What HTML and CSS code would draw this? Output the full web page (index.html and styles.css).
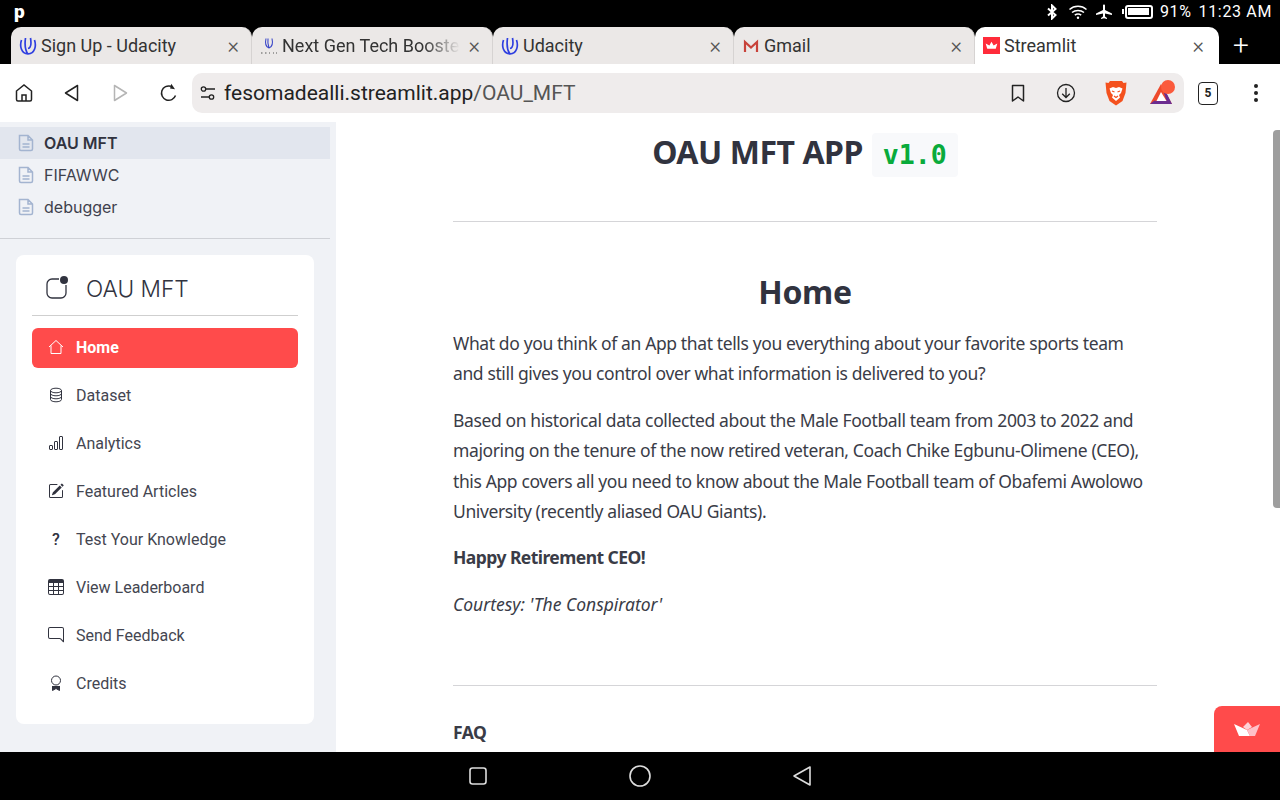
FILE: index.html
```html
<!DOCTYPE html>
<html lang="en">
<head>
    <meta charset="UTF-8">
    <title>Streamlit</title>
    <link rel="stylesheet" href="styles.css">
</head>
<body>
    <div class="status-bar">
        <span class="status-p">p</span>
        <div class="status-right">
            <svg width="14" height="16" viewBox="0 0 14 16"><path d="M3 4.500 10.500 11 7 14.500V1.500L10.500 5 3 11.500" fill="none" stroke="#fff" stroke-width="2"/></svg>
            <svg class="status-wifi" width="20" height="16" viewBox="0 0 20 16" fill="none" stroke="#fff" stroke-width="1.500"><path d="M1.500 5.500c4.700-4.300 12.300-4.300 17 0M4 8.500c3.200-2.800 8.800-2.800 12 0M6.800 11.200c1.800-1.400 4.600-1.400 6.400 0"/><circle cx="10" cy="13.800" r="1.200" fill="#fff" stroke="none"/></svg>
            <svg width="18" height="16" viewBox="0 0 18 16" fill="#fff"><path d="M8 1.500c0-1.200 2-1.200 2 0V6l7 3.500v1.500L10 9.500v3l2 1.500v1l-3-.8-3 .8v-1l2-1.500v-3L1 11V9.500L8 6z"/></svg>
            <span class="battery-nub"></span>
            <span class="battery"><span class="battery-fill"></span></span>
            <span class="status-text">91%</span>
            <span class="status-text">11:23 AM</span>
        </div>
    </div>

    <div class="tab-strip">
        <div class="tab">
            <svg class="tab-icon" width="18" height="18" viewBox="0 0 18 18" fill="none" stroke="#2f3fe0" stroke-width="1.700"><path d="M2.500 3C.5 9 2 16.500 9 17c7-.5 8.500-8 6.500-14M6.500 1C5.500 8 6 13 9 17M11.500 1C12.500 7 12 11 9 11.500"/></svg>
            <span class="tab-title">Sign Up - Udacity</span>
            <span class="tab-close">×</span>
        </div>
        <div class="tab">
            <svg class="tab-icon" width="18" height="18" viewBox="0 0 18 18" fill="none" stroke="#3a46c8" stroke-width="1.100"><path d="M6 1.500C5 6 6 10 9 11c3-1 4-5 3-9.500M8 1.500C7.500 5 8 8 9 11"/><path d="M1 16h1.500M5 16h1.500M9 16h1M13 16h1M16 16h1" stroke="#555"/></svg>
            <span class="tab-title tab-fade">Next Gen Tech Booster</span>
            <span class="tab-close">×</span>
        </div>
        <div class="tab">
            <svg class="tab-icon" width="18" height="18" viewBox="0 0 18 18" fill="none" stroke="#2f3fe0" stroke-width="1.700"><path d="M2.500 3C.5 9 2 16.500 9 17c7-.5 8.500-8 6.500-14M6.500 1C5.500 8 6 13 9 17M11.500 1C12.500 7 12 11 9 11.500"/></svg>
            <span class="tab-title">Udacity</span>
            <span class="tab-close">×</span>
        </div>
        <div class="tab">
            <svg class="tab-icon" width="18" height="18" viewBox="0 0 18 18" fill="none" stroke="#c8423a" stroke-width="2.200"><path d="M3 15V5l6 5.500L15 5v10"/></svg>
            <span class="tab-title">Gmail</span>
            <span class="tab-close">×</span>
        </div>
        <div class="tab tab-active">
            <svg class="tab-icon" width="17" height="17" viewBox="0 0 16 16"><rect width="16" height="16" fill="#ff2b3a"/><path d="M2.500 6 6 8l2-3.500L10 8l3.500-2-1.500 5H4z" fill="#fff"/></svg>
            <span class="tab-title">Streamlit</span>
            <span class="tab-close">×</span>
        </div>
        <span class="tab-new">+</span>
    </div>

    <div class="toolbar">
        <div class="tool-btn">
            <svg width="20" height="20" viewBox="0 0 20 20" fill="none" stroke="#222" stroke-width="1.500"><path d="M2.500 8 10 2l7.500 6v8.500a1.500 1.500 0 0 1-1.500 1.500H4a1.500 1.500 0 0 1-1.500-1.500zM8 18v-6h4v6"/></svg>
        </div>
        <div class="tool-btn">
            <svg width="20" height="20" viewBox="0 0 20 20" fill="none" stroke="#222" stroke-width="1.500" stroke-linejoin="round"><path d="M15.500 2.500v15L3.500 10z"/></svg>
        </div>
        <div class="tool-btn">
            <svg width="20" height="20" viewBox="0 0 20 20" fill="none" stroke="#b5b5b5" stroke-width="1.500" stroke-linejoin="round"><path d="M4.500 2.500v15l12-7.500z"/></svg>
        </div>
        <div class="tool-btn tool-reload">
            <svg width="20" height="20" viewBox="0 0 20 20" fill="none" stroke="#222" stroke-width="1.500"><path d="M16.500 12.500A7.200 7.200 0 1 1 12 3.300"/><path d="M11.500 1v5l5-.5z" fill="#222" stroke="none" transform="rotate(15 13 4)"/></svg>
        </div>
        <div class="address-bar">
            <svg class="address-tune" width="18" height="18" viewBox="0 0 18 18" fill="none" stroke="#222" stroke-width="1.300"><circle cx="4.500" cy="5" r="2.200"/><path d="M7 5h9M2 13h8"/><circle cx="12.500" cy="13" r="2.200"/></svg>
            <span class="address-text">fesomadealli.streamlit.app<span class="address-path">/OAU_MFT</span></span>
            <div class="address-icons">
                <svg width="20" height="20" viewBox="0 0 20 20" fill="none" stroke="#222" stroke-width="1.500" stroke-linejoin="round"><path d="M4.500 2.500h11v15.500L10 14l-5.500 4z"/></svg>
                <svg width="20" height="20" viewBox="0 0 20 20" fill="none" stroke="#222" stroke-width="1.300"><circle cx="10" cy="10" r="8.500"/><path d="M10 5v9.500M6.200 10.800 10 14.500l3.800-3.700"/></svg>
                <svg class="brave-icon" width="24" height="26" viewBox="0 0 24 26"><path d="M6 1h12l1.500 2 3-.5L21.500 13l-3 8-6.500 4.500L5.500 21l-3-8L1.500 2.500l3 .5z" fill="#f4511e"/><path d="M5.500 8.500 9 7l3 1 3-1 3.500 1.500L17 13l-2 2 1 2.500-4 3.500-4-3.500 1-2.500-2-2z" fill="#fff"/><path d="M8 11l2.500 1M16 11l-2.500 1M10 16l2 1.500 2-1.500" stroke="#f4511e" stroke-width="1.300" fill="none"/></svg>
                <svg class="bat-icon" width="30" height="30" viewBox="0 0 30 30"><path d="M15 6 4 26h22z" fill="#ee4a2c"/><path d="M4 26h22L20 14l-2 1 2.500 8h-10l-2-.5z" fill="#6b2d90"/><path d="M15 14 10.500 23h10z" fill="#fff"/><circle cx="22" cy="9" r="7" fill="#fb5a3c"/></svg>
            </div>
        </div>
        <div class="tool-right">
            <span class="tab-count">5</span>
            <svg width="6" height="20" viewBox="0 0 6 20" fill="#222"><circle cx="3" cy="3" r="2"/><circle cx="3" cy="10" r="2"/><circle cx="3" cy="17" r="2"/></svg>
        </div>
    </div>

    <div class="app">
        <aside class="sidebar">
            <ul class="page-nav">
                <li class="page-link page-link-active">
                    <svg class="page-icon" width="16" height="18" viewBox="0 0 16 18" fill="none" stroke="#a3b4d0" stroke-width="1.500"><path d="M1.500 1.500h8.500l4.500 4.500v9a1.500 1.500 0 0 1-1.500 1.500H3A1.500 1.500 0 0 1 1.500 15zM10 1.500V6h4.500M4.500 10h7M4.500 13h7"/></svg>
                    OAU MFT
                </li>
                <li class="page-link">
                    <svg class="page-icon" width="16" height="18" viewBox="0 0 16 18" fill="none" stroke="#a3b4d0" stroke-width="1.500"><path d="M1.500 1.500h8.500l4.500 4.500v9a1.500 1.500 0 0 1-1.500 1.500H3A1.500 1.500 0 0 1 1.500 15zM10 1.500V6h4.500M4.500 10h7M4.500 13h7"/></svg>
                    FIFAWWC
                </li>
                <li class="page-link">
                    <svg class="page-icon" width="16" height="18" viewBox="0 0 16 18" fill="none" stroke="#a3b4d0" stroke-width="1.500"><path d="M1.500 1.500h8.500l4.500 4.500v9a1.500 1.500 0 0 1-1.500 1.500H3A1.500 1.500 0 0 1 1.500 15zM10 1.500V6h4.500M4.500 10h7M4.500 13h7"/></svg>
                    debugger
                </li>
            </ul>
            <div class="side-divider"></div>

            <div class="menu-card">
                <div class="menu-title">
                    <svg width="24" height="24" viewBox="0 0 24 24" fill="none" stroke="#31333f" stroke-width="1.300"><path d="M14 3H7a5 5 0 0 0-5 5v9a5 5 0 0 0 5 5h9a5 5 0 0 0 5-5V9"/><circle cx="19" cy="4" r="4" fill="#31333f" stroke="none"/></svg>
                    <span>OAU MFT</span>
                </div>
                <div class="menu-rule"></div>
                <ul class="menu-list">
                    <li class="menu-item menu-item-active">
                        <svg width="16" height="16" viewBox="0 0 16 16" fill="none" stroke="#fff" stroke-width="1"><path d="M1 8 8 1.500 15 8M3 6.500v8h10v-8"/></svg>
                        Home
                    </li>
                    <li class="menu-item">
                        <svg width="16" height="16" viewBox="0 0 16 16" fill="none" stroke="#31333f" stroke-width="1"><ellipse cx="8" cy="3.500" rx="5.500" ry="2.300"/><path d="M2.500 3.500v9c0 1.300 2.500 2.300 5.500 2.300s5.500-1 5.500-2.300v-9M2.500 6.500c0 1.300 2.500 2.300 5.500 2.300s5.500-1 5.500-2.300M2.500 9.500c0 1.300 2.500 2.300 5.500 2.300s5.500-1 5.500-2.300"/></svg>
                        Dataset
                    </li>
                    <li class="menu-item">
                        <svg width="16" height="16" viewBox="0 0 16 16" fill="none" stroke="#31333f" stroke-width="1"><rect x="1.500" y="10.500" width="3" height="4" rx=".5"/><rect x="6.500" y="6.500" width="3" height="8" rx=".5"/><rect x="11.500" y="1.500" width="3" height="13" rx=".5"/></svg>
                        Analytics
                    </li>
                    <li class="menu-item">
                        <svg width="16" height="16" viewBox="0 0 16 16" fill="#31333f"><path d="M15.502 1.940a.5.5 0 0 1 0 .706L14.459 3.690l-2-2L13.502.646a.5.5 0 0 1 .707 0l1.293 1.293zm-1.750 2.456-2-2L4.939 9.210a.5.5 0 0 0-.121.196l-.805 2.414a.25.25 0 0 0 .316.316l2.414-.805a.5.5 0 0 0 .196-.12l6.813-6.814z"/><path fill-rule="evenodd" d="M1 13.500A1.500 1.500 0 0 0 2.500 15h11a1.500 1.500 0 0 0 1.500-1.500v-6a.5.5 0 0 0-1 0v6a.5.5 0 0 1-.5.5h-11a.5.5 0 0 1-.5-.5v-11a.5.5 0 0 1 .5-.5H9a.5.5 0 0 0 0-1H2.500A1.500 1.500 0 0 0 1 2.500v11z"/></svg>
                        Featured Articles
                    </li>
                    <li class="menu-item">
                        <span class="menu-q">?</span>
                        Test Your Knowledge
                    </li>
                    <li class="menu-item">
                        <svg width="16" height="16" viewBox="0 0 16 16" fill="#31333f"><path d="M0 2a2 2 0 0 1 2-2h12a2 2 0 0 1 2 2v12a2 2 0 0 1-2 2H2a2 2 0 0 1-2-2V2zm15 2h-4v3h4V4zm0 4h-4v3h4V8zm0 4h-4v3h3a1 1 0 0 0 1-1v-2zm-5 3v-3H6v3h4zm-5 0v-3H1v2a1 1 0 0 0 1 1h3zm-4-4h4V8H1v3zm0-4h4V4H1v3zm5-3v3h4V4H6zm4 4H6v3h4V8z"/></svg>
                        View Leaderboard
                    </li>
                    <li class="menu-item">
                        <svg width="16" height="16" viewBox="0 0 16 16" fill="#31333f"><path d="M2 1a1 1 0 0 0-1 1v8a1 1 0 0 0 1 1h9.586a2 2 0 0 1 1.414.586l2 2V2a1 1 0 0 0-1-1H2zm12-1a2 2 0 0 1 2 2v12.793a.5.5 0 0 1-.854.353l-2.853-2.853a1 1 0 0 0-.707-.293H2a2 2 0 0 1-2-2V2a2 2 0 0 1 2-2h12z"/></svg>
                        Send Feedback
                    </li>
                    <li class="menu-item">
                        <svg width="16" height="16" viewBox="0 0 16 16" fill="none" stroke="#31333f" stroke-width="1"><circle cx="8" cy="5.500" r="4.500"/><path d="M4.500 11v4.500L8 13.500l3.500 2V11" fill="#31333f"/></svg>
                        Credits
                    </li>
                </ul>
            </div>
        </aside>

        <main class="main">
            <div class="content">
                <h1 class="app-title">OAU MFT APP <code class="version">v1.0</code></h1>
                <hr class="rule">
                <h2 class="page-title">Home</h2>
                <p>What do you think of an App that tells you everything about your favorite sports team and still gives you control over what information is delivered to you?</p>
                <p>Based on historical data collected about the Male Football team from 2003 to 2022 and majoring on the tenure of the now retired veteran, Coach Chike Egbunu-Olimene (CEO), this App covers all you need to know about the Male Football team of Obafemi Awolowo University (recently aliased OAU Giants).</p>
                <p><strong>Happy Retirement CEO!</strong></p>
                <p><em>Courtesy: 'The Conspirator'</em></p>
                <hr class="rule rule-bottom">
                <p><strong>FAQ</strong></p>
            </div>
            <div class="scroll-thumb"></div>
            <div class="hosted-badge">
                <svg width="28" height="16" viewBox="0 0 28 16"><path d="M1 3l13 6 3 6H6z" fill="#fff"/><path d="M14 9l-4-3 5-5 4 5z" fill="#ffd0d6"/><path d="M27 3l-5 12h-5l-3-6z" fill="#ffc0c8"/></svg>
            </div>
        </main>
    </div>

    <div class="nav-bar">
        <svg width="20" height="20" viewBox="0 0 20 20" fill="none" stroke="#ddd" stroke-width="1.600"><rect x="2" y="2" width="16" height="16" rx="2.500"/></svg>
        <svg width="24" height="24" viewBox="0 0 24 24" fill="none" stroke="#ddd" stroke-width="1.600"><circle cx="12" cy="12" r="10"/></svg>
        <svg width="20" height="22" viewBox="0 0 20 22" fill="none" stroke="#ddd" stroke-width="1.600" stroke-linejoin="round"><path d="M18 2v18L2 11z"/></svg>
    </div>
</body>
</html>
```

FILE: styles.css
```css
* {
    margin: 0;
    padding: 0;
    box-sizing: border-box;
}

body {
    width: 1280px;
    height: 800px;
    overflow: hidden;
    display: flex;
    flex-direction: column;
    font-family: 'Roboto', sans-serif;
    background-color: #000;
    color: #31333f;
}

ul {
    list-style: none;
}

.status-bar {
    height: 27px;
    flex-shrink: 0;
    display: flex;
    justify-content: space-between;
    align-items: center;
    padding: 0 8px 4px 14px;
    color: #fff;
}

.status-p {
    font-size: 19px;
    font-weight: 900;
    line-height: 1;
}

.status-right {
    display: flex;
    align-items: center;
    gap: 7px;
}

.status-wifi {
    margin-left: 2px;
}

.status-text {
    font-size: 16px;
    letter-spacing: 0.65px;
}

.battery-nub {
    width: 2px;
    height: 5px;
    margin: 0 -7px 0 2px;
    background-color: #fff;
}

.battery {
    width: 28px;
    height: 14px;
    border: 2px solid #fff;
    border-radius: 3px;
    padding: 1.5px;
    margin-left: 1px;
    display: block;
}

.battery-fill {
    display: block;
    height: 100%;
    background-color: #fff;
}

.tab-strip {
    height: 37px;
    flex-shrink: 0;
    display: flex;
    padding-left: 11px;
}

.tab {
    width: 241px;
    height: 37px;
    display: flex;
    align-items: center;
    padding: 0 12px 0 8px;
    background-color: #ebe8e7;
    border-radius: 10px 10px 0 0;
    border-right: 1px solid #d6d3d2;
    color: #333;
}

.tab-active {
    width: 244px;
    padding-right: 15px;
    background-color: #fff;
    border-right: none;
}

.tab-icon {
    flex-shrink: 0;
    margin-right: 4px;
}

.tab-title {
    flex: 1;
    font-size: 18px;
    white-space: nowrap;
    overflow: hidden;
}

.tab-fade {
    -webkit-mask-image: linear-gradient(to right, #000 80%, transparent);
    mask-image: linear-gradient(to right, #000 80%, transparent);
}

.tab-close {
    font-size: 22px;
    font-weight: 300;
    color: #555;
    line-height: 1;
    margin-left: 8px;
}

.tab-new {
    color: #fff;
    font-size: 28px;
    font-weight: 300;
    line-height: 37px;
    margin-left: 14px;
}

.toolbar {
    height: 58px;
    flex-shrink: 0;
    background-color: #fff;
    display: flex;
    align-items: center;
}

.tool-btn {
    width: 48px;
    display: flex;
    justify-content: center;
}

.tool-reload {
    padding-left: 2px;
}

.address-bar {
    width: 992px;
    height: 40px;
    display: flex;
    align-items: center;
    padding-left: 7px;
    border-radius: 10px;
    background-color: #efecec;
}

.address-tune {
    margin-right: 7px;
}

.address-text {
    font-size: 21px;
    color: #222;
    white-space: nowrap;
}

.address-path {
    color: #555;
}

.address-icons {
    margin-left: auto;
    display: flex;
    align-items: center;
    gap: 28px;
    padding-right: 8px;
}

.brave-icon {
    margin-right: -10px;
}

.tool-right {
    flex: 1;
    display: flex;
    align-items: center;
    justify-content: space-between;
    padding-left: 14px;
    padding-right: 21px;
}

.tab-count {
    width: 20px;
    height: 23px;
    border: 1.5px solid #222;
    border-radius: 4px;
    font-size: 12px;
    font-weight: 700;
    line-height: 20px;
    text-align: center;
    color: #222;
}

.app {
    height: 630px;
    flex-shrink: 0;
    display: flex;
    background-color: #fff;
}

.sidebar {
    width: 336px;
    flex-shrink: 0;
    background-color: #f0f2f6;
    padding-top: 5px;
}

.page-nav {
    width: 330px;
}

.page-link {
    height: 32px;
    display: flex;
    align-items: center;
    gap: 10px;
    padding-left: 18px;
    font-family: 'Inter', sans-serif;
    font-size: 16px;
    color: #3f414d;
}

.page-link-active {
    background-color: #e2e6ee;
    font-weight: 600;
    color: #31333f;
}

.page-icon {
    flex-shrink: 0;
}

.side-divider {
    width: 330px;
    height: 1px;
    margin-top: 15px;
    background-color: #cfd1d6;
}

.menu-card {
    width: 298px;
    height: 469px;
    margin: 16px 0 0 16px;
    padding: 16px;
    background-color: #fff;
    border-radius: 8px;
}

.menu-title {
    height: 44px;
    display: flex;
    align-items: center;
    gap: 17px;
    padding: 0 0 10px 13px;
    font-family: 'Inter', sans-serif;
    font-size: 22.7px;
    font-weight: 300;
    color: #31333f;
}

.menu-rule {
    height: 1px;
    background-color: #cfcfcf;
}

.menu-list {
    margin-top: 12px;
    display: flex;
    flex-direction: column;
    gap: 8px;
}

.menu-item {
    height: 40px;
    display: flex;
    align-items: center;
    gap: 12px;
    padding: 0 0 2px 16px;
    border-radius: 6px;
    font-size: 16px;
    color: #444651;
}

.menu-item-active {
    background-color: #ff4b4b;
    color: #fff;
    font-weight: 700;
}

.menu-q {
    width: 16px;
    text-align: center;
    font-weight: 500;
    color: #31333f;
}

.main {
    flex: 1;
    position: relative;
    overflow: hidden;
}

.content {
    width: 704px;
    margin-left: 117px;
    font-family: 'Noto Sans', sans-serif;
    font-size: 17.5px;
    line-height: 30.4px;
    letter-spacing: -0.38px;
    color: #3a3c47;
}

.content p {
    margin-bottom: 16px;
}

.content strong {
    letter-spacing: -0.55px;
}

.content em {
    letter-spacing: 0;
}

.app-title {
    height: 99px;
    padding-top: 8px;
    text-align: center;
    font-size: 32px;
    font-weight: 700;
    line-height: 44px;
    letter-spacing: -0.45px;
    color: #31333f;
}

.version {
    display: inline-block;
    height: 44px;
    margin: 3px 0 0 1px;
    padding: 0 11px;
    border-radius: 4px;
    background-color: #f8f9fb;
    font-family: 'DejaVu Sans Mono', monospace;
    font-size: 26.6px;
    font-weight: 700;
    letter-spacing: 0;
    color: #09ab3b;
    vertical-align: top;
}

.rule {
    border: none;
    height: 1px;
    background-color: #d5d5d8;
}

.page-title {
    margin-top: 48px;
    margin-bottom: 14px;
    text-align: center;
    font-size: 32px;
    font-weight: 700;
    line-height: 44px;
    color: #31333f;
}

.rule-bottom {
    margin-top: 66px;
    margin-bottom: 31px;
}

.scroll-thumb {
    position: absolute;
    top: 8px;
    right: 0;
    width: 7px;
    height: 378px;
    border-radius: 4px 0 0 4px;
    background-color: #9e9e9e;
}

.hosted-badge {
    position: absolute;
    right: 0;
    bottom: 0;
    width: 66px;
    height: 46px;
    display: flex;
    align-items: center;
    justify-content: center;
    border-radius: 8px 0 0 0;
    background-color: #ff4b4b;
}

.nav-bar {
    height: 48px;
    flex-shrink: 0;
    display: flex;
    justify-content: center;
    align-items: center;
    gap: 140px;
    background-color: #000;
}
```
